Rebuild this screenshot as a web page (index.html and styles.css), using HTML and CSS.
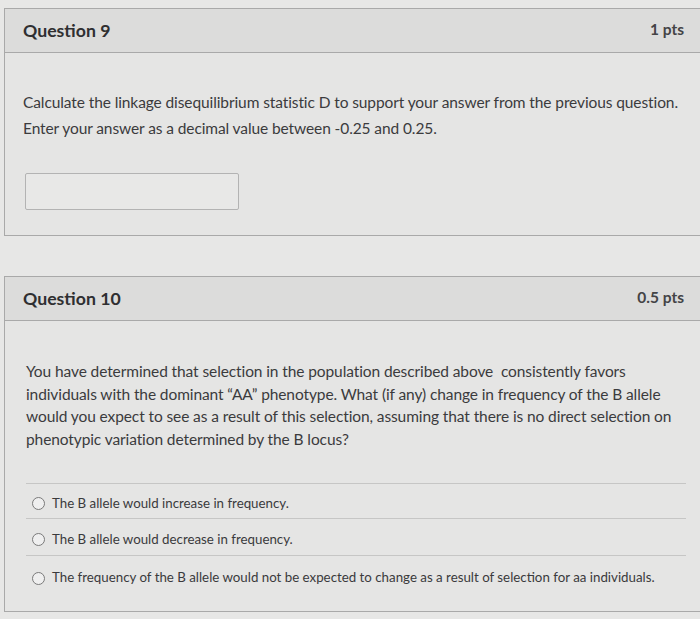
FILE: index.html
```html
<!DOCTYPE html>
<html>
<head>
<meta charset="utf-8">
<link rel="stylesheet" href="styles.css">
</head>
<body>
<div class="page">
  <section class="card card-q9">
    <header class="card-head">
      <h2 class="q-title">Question 9</h2>
      <span class="q-pts">1 pts</span>
    </header>
    <div class="card-body q9-body">
      <p class="q9-text">Calculate the linkage disequilibrium statistic D to support your answer from the previous question.<br>Enter your answer as a decimal value between -0.25 and 0.25.</p>
      <div class="answer-input"></div>
    </div>
  </section>

  <section class="card card-q10">
    <header class="card-head">
      <h2 class="q-title">Question 10</h2>
      <span class="q-pts">0.5 pts</span>
    </header>
    <div class="card-body q10-body">
      <p class="q10-text">You have determined that selection in the population described above &nbsp;consistently favors individuals with the dominant “AA” phenotype. What (if any) change in frequency of the B allele would you expect to see as a result of this selection, assuming that there is no direct selection on phenotypic variation determined by the B locus?</p>
      <ul class="answers">
        <li class="answer"><span class="radio"></span>The B allele would increase in frequency.</li>
        <li class="answer"><span class="radio"></span>The B allele would decrease in frequency.</li>
        <li class="answer"><span class="radio"></span>The frequency of the B allele would not be expected to change as a result of selection for aa individuals.</li>
      </ul>
    </div>
  </section>
</div>
</body>
</html>
```

FILE: styles.css
```css
html, body {
  margin: 0;
  padding: 0;
}
body {
  background: #e7e7e6;
  font-family: Lato, "Open Sans", sans-serif;
  color: #3b3b3d;
  width: 700px;
  height: 619px;
  overflow: hidden;
}
.page {
  padding: 8px 0 0 4px;
  display: flex;
  flex-direction: column;
  gap: 40px;
}
.card {
  border: 1px solid #a9a9a9;
  border-right: none;
  background: #e5e5e4;
}
.card-head {
  height: 43px;
  background: #dcdcdb;
  border-bottom: 1px solid #a9a9a9;
  display: flex;
  align-items: center;
  justify-content: space-between;
  padding: 0 16px 0 18px;
}
.q-title {
  margin: 0;
  font-size: 17.7px;
  font-weight: 700;
  color: #2f2f31;
}
.q-pts {
  font-size: 15.5px;
  font-weight: 700;
  color: #444446;
  position: relative;
  top: -2px;
}
.q9-body {
  padding: 36px 18px 25px 18px;
}
.q9-text {
  margin: 0;
  font-size: 15.5px;
  line-height: 26px;
  letter-spacing: -0.1px;
}
.answer-input {
  margin-top: 32px;
  margin-left: 2px;
  width: 212px;
  height: 35px;
  border: 1px solid #b3b3b3;
  border-radius: 2px;
  background: #e8e8e7;
}
.q10-body {
  padding: 39px 14px 14px 21px;
}
.q10-text {
  margin: 0;
  width: 650px;
  font-size: 15.5px;
  line-height: 22.5px;
  letter-spacing: -0.1px;
}
.answers {
  list-style: none;
  margin: 33px 0 0 0;
  padding: 0;
}
.answer {
  display: flex;
  align-items: center;
  gap: 7px;
  height: 35px;
  border-top: 1px solid #c6c6c5;
  padding-left: 6px;
  padding-top: 4px;
  box-sizing: border-box;
  font-size: 13.3px;
  color: #3a3a3c;
}
.answer:nth-child(2) {
  height: 37px;
}
.answer:last-child {
  height: 42px;
  align-items: flex-start;
  padding-top: 13px;
}
.radio {
  width: 11px;
  height: 11px;
  border: 1px solid #7a7a7a;
  border-radius: 50%;
  background: #efefef;
  flex: none;
}
.answer:last-child .radio {
  margin-top: 3px;
}
```
